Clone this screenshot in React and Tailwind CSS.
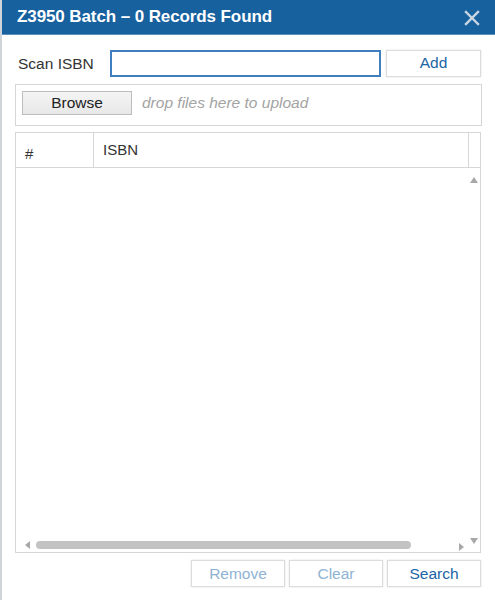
import React from "react";

const font = { fontFamily: '"Liberation Sans", Arial, sans-serif' };

function Btn({ children, className = "" }) {
  return (
    <button
      className={`flex items-center justify-center bg-white border border-[#dcdcdc] shadow-[0_0_2px_rgba(0,0,0,0.12)] text-[15.5px] ${className}`}
    >
      {children}
    </button>
  );
}

export default function App() {
  return (
    <div
      className="w-[495px] h-[600px] bg-white border-l-2 border-[#cfd4da] flex flex-col overflow-hidden"
      style={font}
    >
      {/* title bar */}
      <div className="h-[35px] bg-[#17619f] flex items-center justify-between pl-[15px] pr-[15px] border-b border-[#5b8fc0]">
        <span className="text-white font-bold text-[17px] tracking-[-0.1px]">
          Z3950 Batch – 0 Records Found
        </span>
        <svg width="16" height="16" viewBox="0 0 16 16" className="mt-[1px]">
          <path d="M2 2 L14 14 M14 2 L2 14" stroke="#c9d6e3" strokeWidth="2.4" strokeLinecap="square" />
        </svg>
      </div>

      <div className="flex flex-col px-[13px] flex-1">
        {/* scan row */}
        <div className="flex items-center mt-[15px] h-[27px]">
          <span className="w-[95px] pl-[3px] text-[15.5px] text-[#333]">Scan ISBN</span>
          <input
            className="w-[271px] h-[27px] border-2 border-[#3f7fbf] outline-none"
            type="text"
          />
          <Btn className="ml-[5px] w-[95px] h-[27px] text-[#1b64a5] -mt-[1px]">Add</Btn>
        </div>

        {/* upload zone */}
        <div className="mt-[7px] h-[42px] w-[467px] border border-[#d6d6d6] flex items-start pt-[6px] pl-[6px]">
          <button className="w-[110px] h-[24px] bg-gradient-to-b from-[#f4f4f4] to-[#e8e8e8] border border-[#bdbdbd] text-[15.5px] text-[#222] leading-none">
            Browse
          </button>
          <span className="ml-[10px] mt-[3px] italic text-[15.5px] leading-[18px] text-[#a3a3a3]">
            drop files here to upload
          </span>
        </div>

        {/* grid */}
        <div className="mt-[6px] w-[466px] h-[421px] border border-[#d6d6d6] flex flex-col">
          <div className="h-[35px] flex border-b border-[#d6d6d6] text-[15px] text-[#333]">
            <div className="w-[78px] border-r border-[#d6d6d6] pl-[9px] pt-[10px]">#</div>
            <div className="flex-1 border-r border-[#d6d6d6] pl-[9px] pt-[6px]">ISBN</div>
            <div className="w-[11px]" />
          </div>
          <div className="flex-1 relative">
            {/* vertical scroll arrows */}
            <svg className="absolute right-[2px] top-[9px]" width="8" height="6" viewBox="0 0 8 6">
              <path d="M0 6 L4 0 L8 6 Z" fill="#a8a8a8" />
            </svg>
            <svg className="absolute right-[2px] bottom-[8px]" width="8" height="6" viewBox="0 0 8 6">
              <path d="M0 0 L4 6 L8 0 Z" fill="#a8a8a8" />
            </svg>
            {/* horizontal scrollbar */}
            <div className="absolute left-0 right-[12px] bottom-0 h-[14px] flex items-center">
              <svg className="ml-[9px]" width="5" height="8" viewBox="0 0 5 8">
                <path d="M5 0 L0 4 L5 8 Z" fill="#a8a8a8" />
              </svg>
              <div className="ml-[6px] w-[375px] h-[8px] rounded-full bg-[#c3c3c3]" />
              <div className="flex-1" />
              <svg className="mr-[4px] mt-[4px]" width="5" height="8" viewBox="0 0 5 8">
                <path d="M0 0 L5 4 L0 8 Z" fill="#a8a8a8" />
              </svg>
            </div>
          </div>
        </div>

        {/* footer buttons */}
        <div className="flex justify-end gap-[4px] mt-[7px] pr-[1px]">
          <Btn className="w-[94px] h-[27px] text-[#8fb3d3]">Remove</Btn>
          <Btn className="w-[94px] h-[27px] text-[#8fb3d3]">Clear</Btn>
          <Btn className="w-[94px] h-[27px] text-[#1b64a5]">Search</Btn>
        </div>
      </div>
    </div>
  );
}
